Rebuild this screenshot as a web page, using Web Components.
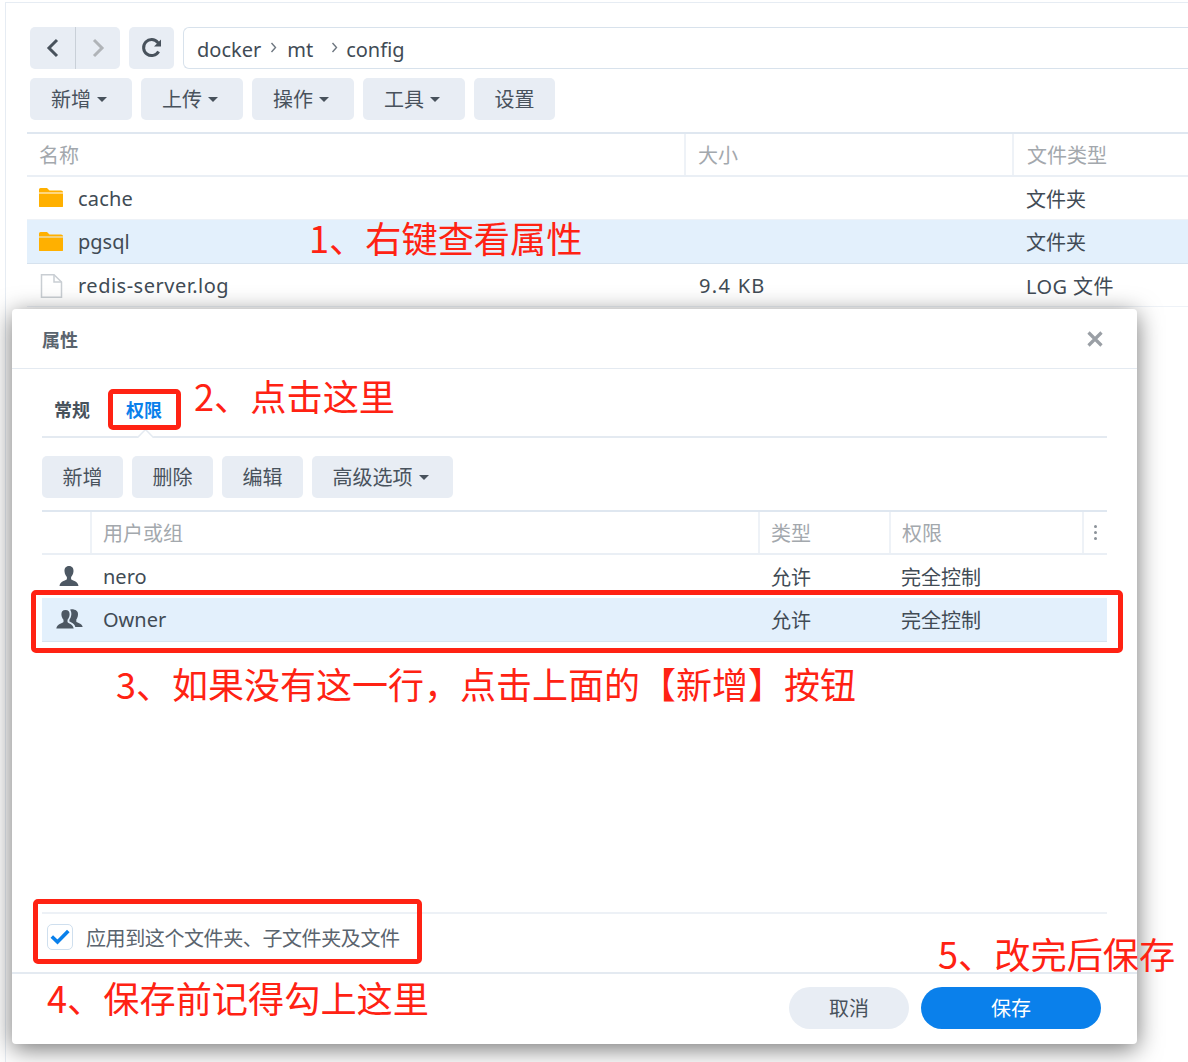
<!DOCTYPE html>
<html lang="zh">
<head>
<meta charset="utf-8">
<title>属性</title>
<style>
  html, body { margin: 0; height: 1062px; overflow: hidden; background: #fff; }
  body { font: 20px "Noto Sans", "Noto Sans CJK SC", sans-serif; color: #414b55; }
</style>
</head>
<body>
<file-window>
  <nav-bar>
    <path-crumb>docker</path-crumb>
    <path-crumb gap="35">mt</path-crumb>
    <path-crumb last>config</path-crumb>
  </nav-bar>
  <tool-bar>
    <syn-btn caret width="102">新增</syn-btn>
    <syn-btn caret width="102">上传</syn-btn>
    <syn-btn caret width="102">操作</syn-btn>
    <syn-btn caret width="102">工具</syn-btn>
    <syn-btn width="81">设置</syn-btn>
  </tool-bar>
  <div style="height:12px"></div>
  <grid-row head style="--cols:657px 328px 1fr">
    <grid-cell pad="12">名称</grid-cell>
    <grid-cell pad="12" rule>大小</grid-cell>
    <grid-cell pad="13" rule>文件类型</grid-cell>
  </grid-row>
  <grid-row style="--cols:657px 328px 1fr">
    <grid-cell pad="12"><file-icon kind="folder"></file-icon><span style="letter-spacing:.2px">cache</span></grid-cell>
    <grid-cell></grid-cell>
    <grid-cell pad="14">文件夹</grid-cell>
  </grid-row>
  <grid-row selected style="--cols:657px 328px 1fr">
    <grid-cell pad="12"><file-icon kind="folder"></file-icon>pgsql</grid-cell>
    <grid-cell></grid-cell>
    <grid-cell pad="14">文件夹</grid-cell>
  </grid-row>
  <grid-row style="--cols:657px 328px 1fr">
    <grid-cell pad="12"><file-icon kind="file"></file-icon><span style="letter-spacing:.5px">redis-server.log</span></grid-cell>
    <grid-cell pad="15"><span style="letter-spacing:1.300px">9.4 KB</span></grid-cell>
    <grid-cell pad="14"><span style="letter-spacing:.4px">LOG 文件</span></grid-cell>
  </grid-row>
</file-window>

<prop-dialog heading="属性">
  <tab-strip></tab-strip>
  <tool-bar flush>
    <syn-btn width="81">新增</syn-btn>
    <syn-btn width="81">删除</syn-btn>
    <syn-btn width="81">编辑</syn-btn>
    <syn-btn caret width="141">高级选项</syn-btn>
  </tool-bar>
  <div style="height:12px"></div>
  <grid-row head style="--cols:48px 668px 131px 193px 1fr">
    <grid-cell></grid-cell>
    <grid-cell pad="11" rule>用户或组</grid-cell>
    <grid-cell pad="11" rule>类型</grid-cell>
    <grid-cell pad="11" rule>权限</grid-cell>
    <grid-cell rule center><more-dots></more-dots></grid-cell>
  </grid-row>
  <grid-row plain style="--cols:48px 668px 131px 193px 1fr">
    <grid-cell center><file-icon kind="user"></file-icon></grid-cell>
    <grid-cell pad="13">nero</grid-cell>
    <grid-cell pad="13">允许</grid-cell>
    <grid-cell pad="12">完全控制</grid-cell>
    <grid-cell></grid-cell>
  </grid-row>
  <grid-row selected style="--cols:48px 668px 131px 193px 1fr">
    <grid-cell center><file-icon kind="group"></file-icon></grid-cell>
    <grid-cell pad="13">Owner</grid-cell>
    <grid-cell pad="13">允许</grid-cell>
    <grid-cell pad="12">完全控制</grid-cell>
    <grid-cell></grid-cell>
  </grid-row>
  <check-line slot="check">应用到这个文件夹、子文件夹及文件</check-line>
  <syn-btn slot="actions" pill width="120">取消</syn-btn>
  <syn-btn slot="actions" pill primary width="180">保存</syn-btn>
</prop-dialog>

<red-box x="108" y="389" w="73" h="41"></red-box>
<red-box x="31" y="590" w="1092" h="63"></red-box>
<red-box x="33" y="899" w="389" h="65"></red-box>

<red-note x="309" y="211">1、右键查看属性</red-note>
<red-note x="194" y="369">2、点击这里</red-note>
<red-note x="116" y="657" style="font-size:36px">3、如果没有这一行，点击上面的【新增】按钮</red-note>
<red-note x="47" y="971">4、保存前记得勾上这里</red-note>
<red-note x="938" y="927">5、改完后保存</red-note>

<script>
  const FONT = '"Noto Sans", "Noto Sans CJK SC", sans-serif'

  /**
   * Small helper, every element here just stamps a style and some markup in an open shadow root.
   *
   * @param {string} name - Tag name.
   * @param {string} html - Shadow markup.
   * @param {Function} [setup] - Runs after the markup is in place.
   */
  function define (name, html, setup) {
    const template = document.createElement('template')
    template.innerHTML = html
    customElements.define(name, class extends HTMLElement {
      constructor () {
        super()
        this.attachShadow({ mode: 'open' }).appendChild(template.content.cloneNode(true))
      }

      connectedCallback () {
        if (setup) setup(this)
      }
    })
  }

  define('file-window', `
    <style>
      :host { display: block; margin: 2px 0 0 5px; padding: 24px 0 0 21px; height: 1035px;
        border-top: 1px solid #e6ecf3; border-left: 1px solid #e6ecf3; }
    </style>
    <slot></slot>
  `)

  define('nav-bar', `
    <style>
      :host { display: flex; height: 42px; margin: 0 -20px 9px 3px; gap: 9px; }
      .group { display: flex; background: #e8edf4; border-radius: 5px; }
      .cell { width: 45px; box-sizing: border-box; display: flex; align-items: center; justify-content: center; }
      .cell + .cell { border-left: 1px solid #c9d0d8; }
      .path { flex: 1; display: flex; align-items: center; padding: 2px 0 0 13px;
        border: 1px solid #d8e2ec; border-right: 0; border-radius: 6px 0 0 6px; }
      svg { fill: none; stroke-width: 3; }
    </style>
    <div class="group">
      <div class="cell"><svg width="14" height="20" viewBox="0 0 14 20" stroke="#48525c"><path d="M11 2 3 10l8 8"/></svg></div>
      <div class="cell"><svg width="14" height="20" viewBox="0 0 14 20" stroke="#b0b4b8"><path d="m3 2 8 8-8 8"/></svg></div>
    </div>
    <div class="group">
      <div class="cell"><svg width="22" height="22" viewBox="0 0 22 22" stroke="#48525c"><path d="M17.6 14.5A8 8 0 1 1 16.8 5.5L19 8"/><path d="M20 2.5V9.5H13" fill="#48525c" stroke="none"/></svg></div>
    </div>
    <div class="path"><slot></slot></div>
  `)

  define('path-crumb', `
    <style>
      :host { display: inline-flex; align-items: center; }
      svg { margin: 0 10px 4px 9px; }
    </style>
    <slot></slot><svg width="7" height="11" viewBox="0 0 7 11" fill="none" stroke="#6e7780" stroke-width="1.4"><path d="m1.5 1 4 4.500-4 4.500"/></svg>
  `, el => {
    const svg = el.shadowRoot.querySelector('svg')
    if (el.hasAttribute('last')) svg.remove()
    if (el.hasAttribute('gap')) {
      svg.style.marginLeft = el.getAttribute('gap') - 17 + 'px'
      svg.style.marginRight = '8px'
    }
  })

  define('tool-bar', `
    <style>
      :host { display: flex; gap: 9px; margin-left: 3px; }
      :host([flush]) { margin-left: 0; }
    </style>
    <slot></slot>
  `)

  define('syn-btn', `
    <style>
      :host { display: inline-flex; align-items: center; justify-content: center; gap: 6px; height: 42px;
        box-sizing: border-box; padding-bottom: 2px; background: #e8edf4; border-radius: 5px; color: #48525c; font: 20px ${FONT}; }
      :host([caret]) { padding-right: 4px; }
      :host([pill]) { border-radius: 21px; }
      :host([primary]) { background: #0a80eb; color: #fff; }
      i { width: 0; height: 0; border: 5px solid transparent; border-top-color: #48525c; border-bottom: 0; margin-top: 3px; }
    </style>
    <slot></slot><i></i>
  `, el => {
    el.style.width = el.getAttribute('width') + 'px'
    if (!el.hasAttribute('caret')) el.shadowRoot.querySelector('i').remove()
  })

  define('grid-row', `
    <style>
      :host { display: grid; grid-template-columns: var(--cols); height: 43px; box-sizing: border-box;
        border-bottom: 1px solid #eef2f7; color: #414b55; font-size: 20px; }
      :host([head]) { height: 45px; border-top: 2px solid #dfe7f0; border-bottom: 2px solid #eaeff5; color: #a3a8ad; }
      :host([plain]) { border-bottom: 0; }
      :host([selected]) { height: 44px; background: #e3f0fc; border-bottom: 1px solid #d6e2ee; }
    </style>
    <slot></slot>
  `)

  define('grid-cell', `
    <style>
      :host { display: flex; align-items: center; min-width: 0; white-space: nowrap; box-sizing: border-box; }
      :host([rule]) { border-left: 2px solid #eef2f7; }
      :host([center]) { justify-content: center; }
    </style>
    <slot></slot>
  `, el => {
    if (el.hasAttribute('pad')) el.style.paddingLeft = el.getAttribute('pad') + 'px'
  })

  const ICONS = {
    folder: `<svg width="24" height="20" viewBox="0 0 24 20"><path fill="#ffb000" d="M0 2.500Q0 1 1.500 1H8l2.500 2.500H22Q24 3.500 24 5V5.500H0Z"/><path fill="#ffb000" d="M0 6.500H24V19Q24 20.500 22.500 20.500H1.500Q0 20.500 0 19Z"/></svg>`,
    file: `<svg width="24" height="24" viewBox="0 0 24 24" fill="#fff" stroke="#c9ced3" stroke-width="1.500"><path d="M2.500.8H15L22.500 8V23.200H2.500Z"/><path d="M15 .8V8H22.500" fill="none"/></svg>`,
    user: `<svg width="20" height="20" viewBox="0 0 20 20" fill="#4d5863"><path d="M10 0C6.800 0 5.300 2.300 5.500 5.300 5.700 8 6.900 10 7.900 11V13.300C6.500 14.600 1.200 15.300.5 20H19.500C18.800 15.300 13.500 14.600 12.100 13.300V11C13.100 10 14.300 8 14.500 5.300 14.700 2.300 13.200 0 10 0Z"/></svg>`,
    group: `<svg width="27" height="20" viewBox="0 0 27 20" fill="#4d5863"><path d="M9.500 1C6.500 1 5.200 3 5.400 5.700 5.600 8 6.700 9.800 7.500 10.700V13C6.200 14.200 1 15 .3 19.500H17.700C17 15 12 14.200 11.500 13V10.700C12.300 9.800 13.400 8 13.600 5.700 13.800 3 12.500 1 9.500 1Z"/><path d="M15.500 .3C14.800 .3 14.300 .5 14 .7 15.200 2 15.500 3.800 15.300 5.800 15.100 8 14.200 9.800 13.400 10.800V12.500C15.200 13.400 18.500 14.700 19.300 18H26.700C26 14.300 21.500 13.800 20.300 12.700V10.500C21 9.600 21.900 8 22 5.500 22.200 2.500 20 .3 15.500 .3Z"/></svg>`
  }

  define('file-icon', `
    <style>
      :host { display: inline-flex; width: 39px; align-items: center; }
      :host([kind=user]), :host([kind=group]) { width: auto; margin: -2px 0 0 6px; }
      :host([kind=file]) { margin-top: 1px; }
      :host([kind=folder]) { margin-top: -2px; }
      svg { display: block; }
    </style>
    <span></span>
  `, el => {
    el.shadowRoot.querySelector('span').innerHTML = ICONS[el.getAttribute('kind')]
  })

  define('more-dots', `
    <style>
      :host { display: flex; flex-direction: column; gap: 3px; margin-left: -1px; }
      b { width: 3px; height: 3px; border-radius: 50%; background: #8b9299; }
    </style>
    <b></b><b></b><b></b>
  `)

  define('tab-strip', `
    <style>
      :host { display: flex; gap: 36px; height: 69px; box-sizing: border-box; padding: 12px 0 0 12px;
        border-bottom: 2px solid #e4eaf1; margin-bottom: 18px; position: relative;
        align-items: center; font: 700 18px ${FONT}; color: #48525c; }
      .on { color: #0a80eb; }
      .tick { position: absolute; left: 96px; bottom: -8px; width: 13px; height: 13px; transform: rotate(45deg) scale(.75);
        background: #fff; border-left: 2px solid #e4eaf1; border-top: 2px solid #e4eaf1; }
    </style>
    <span>常规</span><span class="on">权限</span><i class="tick"></i>
  `)

  define('check-line', `
    <style>
      :host { display: flex; align-items: center; gap: 13px; height: 60px; box-sizing: border-box;
        padding: 0 0 12px 5px; border-top: 2px solid #edf1f6; color: #5a646e; font-size: 20px; letter-spacing: -.4px; }
      .box { width: 26px; height: 26px; box-sizing: border-box; border: 1px solid #cfdfee; border-radius: 5px;
        display: flex; align-items: center; justify-content: center; }
    </style>
    <span class="box"><svg width="20" height="16" viewBox="0 0 20 16" fill="none" stroke="#0a80eb" stroke-width="3.600"><path d="M1.800 7.500 7.500 13 18.300 2"/></svg></span>
    <span><slot></slot></span>
  `)

  define('prop-dialog', `
    <style>
      :host { position: absolute; left: 12px; top: 309px; width: 1125px; height: 735px; display: flex; flex-direction: column;
        box-sizing: border-box; background: #fff; border-radius: 4px; box-shadow: 0 5px 24px rgba(0, 0, 0, .55); }
      header { display: flex; align-items: center; justify-content: space-between; height: 60px; flex: none; box-sizing: border-box;
        padding: 0 34px 0 30px; border-bottom: 1px solid #e4eaf1; font: 700 18px ${FONT}; color: #5a646e; }
      main { flex: 1; padding: 0 30px; min-height: 0; display: flex; flex-direction: column; }
      .fill { flex: 1; }
      footer { flex: none; height: 72px; border-top: 2px solid #e4eaf1; box-sizing: border-box;
        display: flex; justify-content: flex-end; align-items: flex-start; gap: 12px; padding: 13px 36px 0 0; }
      svg { display: block; }
    </style>
    <header>
      <span id="title"></span>
      <svg width="16" height="16" viewBox="0 0 16 16" stroke="#9a9fa5" stroke-width="3.200"><path d="m1.500 1.500 13 13M14.500 1.500l-13 13"/></svg>
    </header>
    <main>
      <slot></slot>
      <div class="fill"></div>
      <slot name="check"></slot>
    </main>
    <footer><slot name="actions"></slot></footer>
  `, el => {
    el.shadowRoot.querySelector('#title').textContent = el.getAttribute('heading')
  })

  define('red-box', `
    <style>
      :host { position: absolute; box-sizing: border-box; border: 5px solid #ff2213; border-radius: 5px; }
    </style>
  `, el => {
    el.style.left = el.getAttribute('x') + 'px'
    el.style.top = el.getAttribute('y') + 'px'
    el.style.width = el.getAttribute('w') + 'px'
    el.style.height = el.getAttribute('h') + 'px'
  })

  define('red-note', `
    <style>
      :host { position: absolute; white-space: nowrap; font: 36.2px/52px "Noto Sans CJK SC", sans-serif; color: #ff2213; }
    </style>
    <slot></slot>
  `, el => {
    el.style.left = el.getAttribute('x') + 'px'
    el.style.top = el.getAttribute('y') + 'px'
  })
</script>
</body>
</html>
